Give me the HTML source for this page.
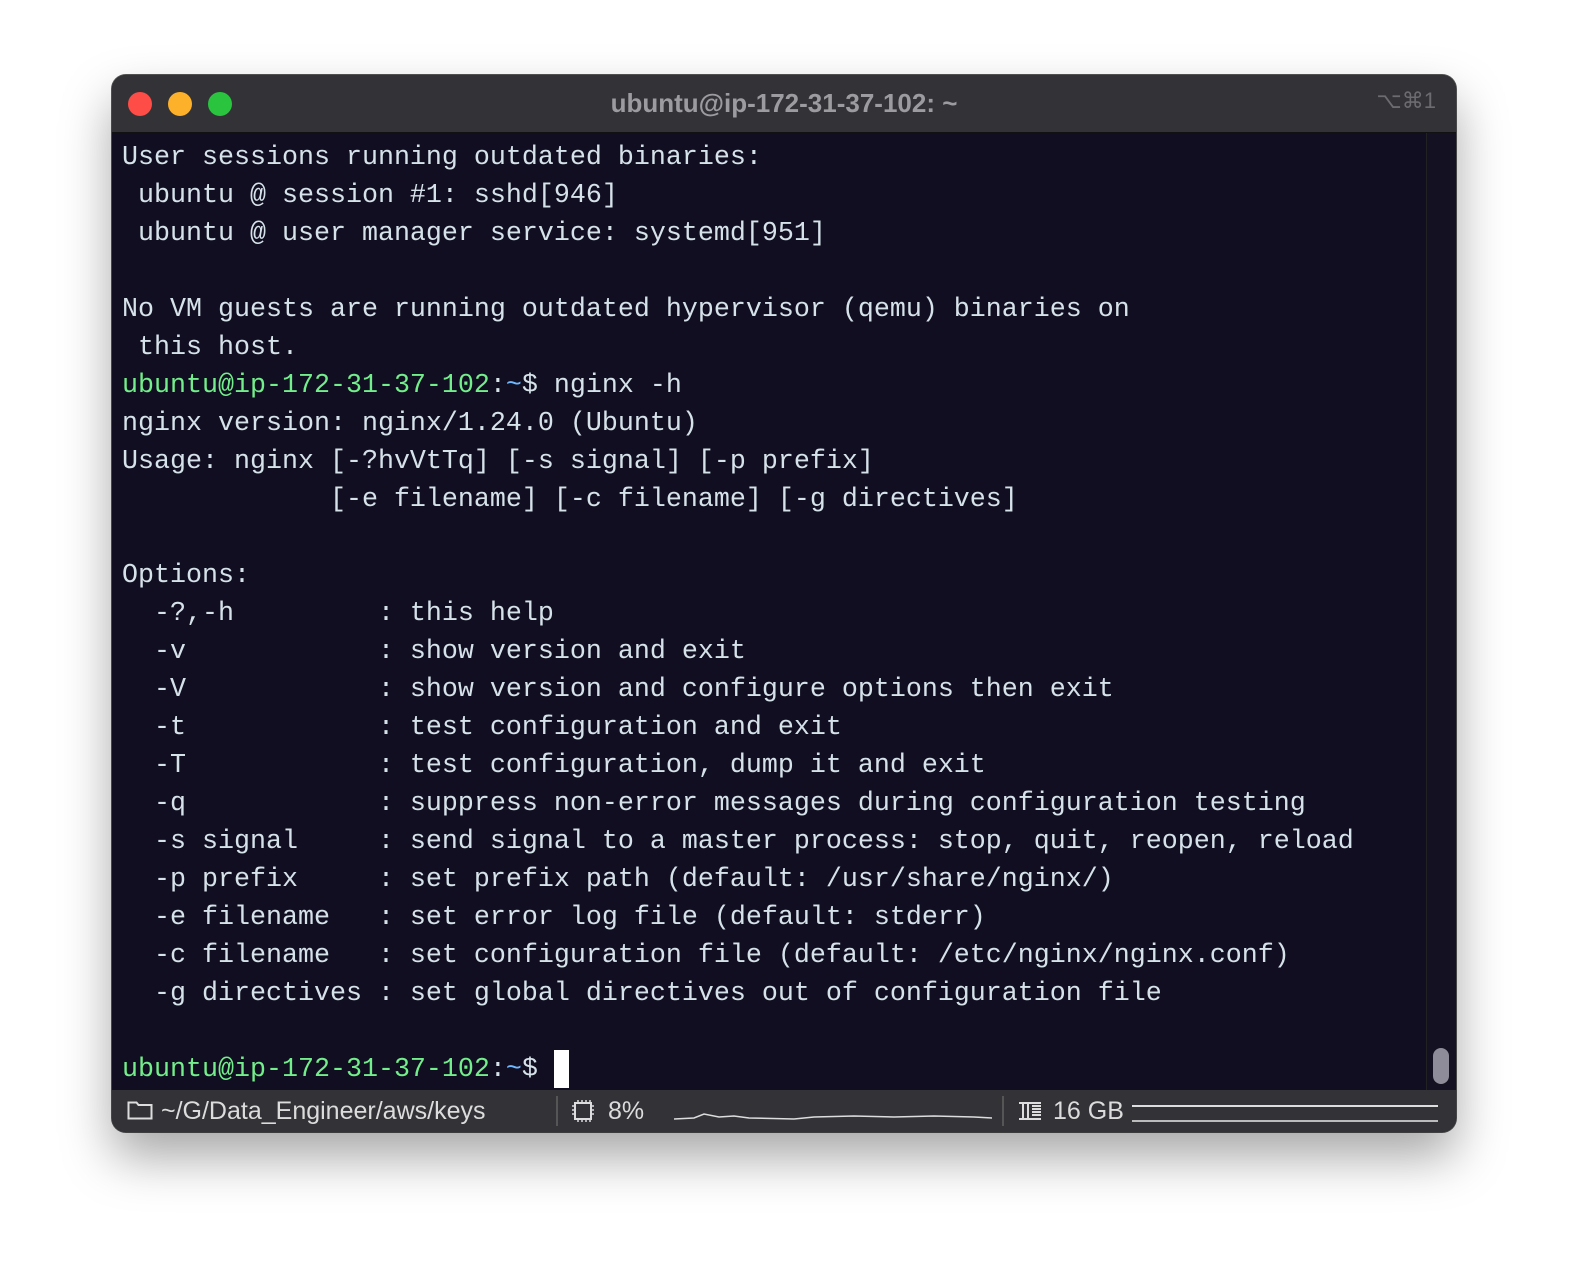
<!DOCTYPE html>
<html><head><meta charset="utf-8"><style>
html,body{margin:0;padding:0;background:#fff;width:1570px;height:1282px;overflow:hidden}
.win{position:absolute;left:112px;top:75px;width:1344px;height:1057px;border-radius:14px;background:#100e20;overflow:hidden;box-shadow:0 25px 50px rgba(0,0,0,.35),0 0 0 1px #555}
.title{position:absolute;left:0;top:0;width:100%;height:57px;background:#333337;border-bottom:1px solid #111}
.dot{position:absolute;top:17px;width:24px;height:24px;border-radius:50%}
.ttl{position:absolute;left:0;right:0;top:13px;text-align:center;font:bold 26px "Liberation Sans",sans-serif;color:#9c9ca0}
.kb{position:absolute;right:20px;top:13px;font:22px "Liberation Sans",sans-serif;color:#6c6c70}
.term{position:absolute;left:10px;top:64px;font:26.67px/38px "Liberation Mono",monospace;color:#d6e2ea;white-space:pre;margin:0}
.g{color:#72ee8a}.b{color:#6fb8ff}
.sb{position:absolute;right:0;top:58px;width:29px;height:957px;background:#141222;border-left:1px solid #222}
.thumb{position:absolute;left:6px;top:915px;width:16px;height:36px;border-radius:8px;background:#8e8c98}
.status{position:absolute;left:0;bottom:0;width:100%;height:42px;background:#333337;font:25px "Liberation Sans",sans-serif;color:#dcdcdc}
.status span{position:absolute;top:7px}
.sep{position:absolute;top:6px;width:2px;height:30px;background:#555}
.cur{position:absolute;left:442px;top:975px;width:15px;height:38px;background:#fff}
</style></head><body>
<div class="win">
<div class="title">
<div class="dot" style="left:16px;background:#fe4c47"></div>
<div class="dot" style="left:56px;background:#fdb12a"></div>
<div class="dot" style="left:96px;background:#2ac43f"></div>
<div class="ttl">ubuntu@ip-172-31-37-102: ~</div>
<div class="kb">⌥⌘1</div>
</div>
<pre class="term">User sessions running outdated binaries:
 ubuntu @ session #1: sshd[946]
 ubuntu @ user manager service: systemd[951]

No VM guests are running outdated hypervisor (qemu) binaries on
 this host.
<span class="g">ubuntu@ip-172-31-37-102</span>:<span class="b">~</span>$ nginx -h
nginx version: nginx/1.24.0 (Ubuntu)
Usage: nginx [-?hvVtTq] [-s signal] [-p prefix]
             [-e filename] [-c filename] [-g directives]

Options:
  -?,-h         : this help
  -v            : show version and exit
  -V            : show version and configure options then exit
  -t            : test configuration and exit
  -T            : test configuration, dump it and exit
  -q            : suppress non-error messages during configuration testing
  -s signal     : send signal to a master process: stop, quit, reopen, reload
  -p prefix     : set prefix path (default: /usr/share/nginx/)
  -e filename   : set error log file (default: stderr)
  -c filename   : set configuration file (default: /etc/nginx/nginx.conf)
  -g directives : set global directives out of configuration file

<span class="g">ubuntu@ip-172-31-37-102</span>:<span class="b">~</span>$ </pre>
<div class="cur"></div>
<div class="sb"><div class="thumb"></div></div>
<div class="status">
<svg style="position:absolute;left:15px;top:10px" width="26" height="20" viewBox="0 0 26 20"><path d="M1.5 2.5h8l2 2.5h13v13.5h-23z" fill="none" stroke="#ddd" stroke-width="2"/></svg>
<span style="left:49px">~/G/Data_Engineer/aws/keys</span>
<div class="sep" style="left:444px"></div>
<svg style="position:absolute;left:459px;top:9px" width="24" height="24" viewBox="0 0 24 24"><rect x="4" y="4" width="16" height="16" fill="none" stroke="#ddd" stroke-width="2"/><path d="M7 1v3M11 1v3M15 1v3M19 1v3M7 20v3M11 20v3M15 20v3M19 20v3M1 7h3M1 11h3M1 15h3M20 7h3M20 11h3M20 15h3" stroke="#ddd" stroke-width="1.5"/></svg>
<span style="left:496px">8%</span>
<svg style="position:absolute;left:562px;top:14px" width="320" height="20"><path d="M0 15 L20 14 L30 10 L45 13 L60 12 L75 14 L120 15 L140 13 L180 12 L220 13 L260 12 L300 13 L318 14" fill="none" stroke="#ddd" stroke-width="1.5"/></svg>
<div class="sep" style="left:890px"></div>
<svg style="position:absolute;left:906px;top:11px" width="24" height="20" viewBox="0 0 24 20"><path d="M1 2h22M1 18h22M5 2v16M10 2v16M14 5h9M14 8h9M14 11h9M14 14h9" stroke="#ddd" stroke-width="2" fill="none"/></svg>
<span style="left:941px">16 GB</span>
<div style="position:absolute;left:1020px;top:15px;width:306px;height:2px;background:#ddd"></div>
<div style="position:absolute;left:1020px;top:30px;width:306px;height:2px;background:#bbb"></div>
</div>
</div>
</body></html>
